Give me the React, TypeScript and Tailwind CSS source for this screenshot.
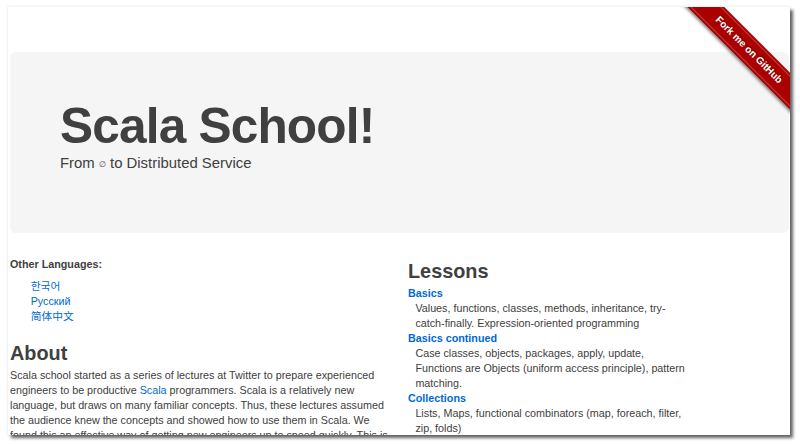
export default function App() {
  const font = { fontFamily: '"Liberation Sans", Arial, Helvetica, sans-serif' };
  return (
    <div className="w-[800px] h-[444px] bg-white pl-[8px] pt-[7px]" style={font}>
      <div className="relative w-[782px] h-[428px] overflow-hidden bg-white shadow-[3px_3px_3px_rgba(0,0,0,0.6),0_0_3px_rgba(0,0,0,0.12)] text-[#404040] text-[10.75px] leading-[15px]">
        <div className="ml-[2px] w-[779px] pt-[45px]">
          <div className="rounded-[6px] bg-[#f5f5f5] p-[50px] mb-[23.5px]">
            <h1 className="text-[49.6px] leading-none font-bold tracking-[-0.83px] text-[#404040]">Scala School!</h1>
            <p className="text-[14.9px] leading-[22.3px] mb-[7.4px]">
              From <span className="text-[8px] align-[1px]" style={{ fontFamily: '"DejaVu Sans", sans-serif' }}>∅</span> to Distributed Service
            </p>
          </div>
          <div className="flex">
            <div className="w-[380px] shrink-0">
              <p className="font-bold mb-[7px]">Other Languages:</p>
              <ul className="ml-[20.7px] mb-[14.9px]" style={{ fontFamily: '"Liberation Sans", "Noto Sans CJK KR", "Noto Sans CJK SC", sans-serif' }}>
                <li><a className="text-[#0069d6]">한국어</a></li>
                <li><a className="text-[#0069d6]">Русский</a></li>
                <li><a className="text-[#0069d6]" style={{ fontFamily: '"Liberation Sans", "Noto Sans CJK SC", sans-serif' }}>简体中文</a></li>
              </ul>
              <h2 className="text-[19.85px] leading-[29.8px] font-bold">About</h2>
              <p>
                Scala school started as a series of lectures at Twitter to prepare experienced engineers to be productive{' '}
                <a className="text-[#0069d6]">Scala</a> programmers. Scala is a relatively new language, but draws on many familiar concepts. Thus, these lectures assumed the audience knew the concepts and showed how to use them in Scala. We found this an effective way of getting new engineers up to speed quickly. This is
              </p>
            </div>
            <div className="w-[281px] ml-[18px] shrink-0">
              <h2 className="text-[19.85px] leading-[29px] font-bold">Lessons</h2>
              <dl>
                <dt className="font-bold"><a className="text-[#0069d6]">Basics</a></dt>
                <dd className="ml-[7.4px]">Values, functions, classes, methods, inheritance, try-catch-finally. Expression-oriented programming</dd>
                <dt className="font-bold"><a className="text-[#0069d6]">Basics continued</a></dt>
                <dd className="ml-[7.4px]">Case classes, objects, packages, apply, update, Functions are Objects (uniform access principle), pattern matching.</dd>
                <dt className="font-bold"><a className="text-[#0069d6]">Collections</a></dt>
                <dd className="ml-[7.4px]">Lists, Maps, functional combinators (map, foreach, filter, zip, folds)</dd>
                <dt className="font-bold"><a className="text-[#0069d6]">Pattern matching &amp; functional composition</a></dt>
              </dl>
            </div>
          </div>
        </div>
        <div className="absolute left-[650.5px] top-[29.75px] w-[180px] h-[25.5px] rotate-45 bg-[#aa0000] shadow-[0_2px_3px_rgba(0,0,0,0.45)] flex items-center justify-center">
          <div className="absolute inset-x-0 top-[1.5px] border-t border-white/25" />
          <div className="absolute inset-x-0 bottom-[1.5px] border-b border-white/25" />
          <span className="text-white font-bold text-[10px] leading-none [text-shadow:0_-1px_rgba(0,0,0,0.5)]">Fork me on GitHub</span>
        </div>
      </div>
    </div>
  );
}
